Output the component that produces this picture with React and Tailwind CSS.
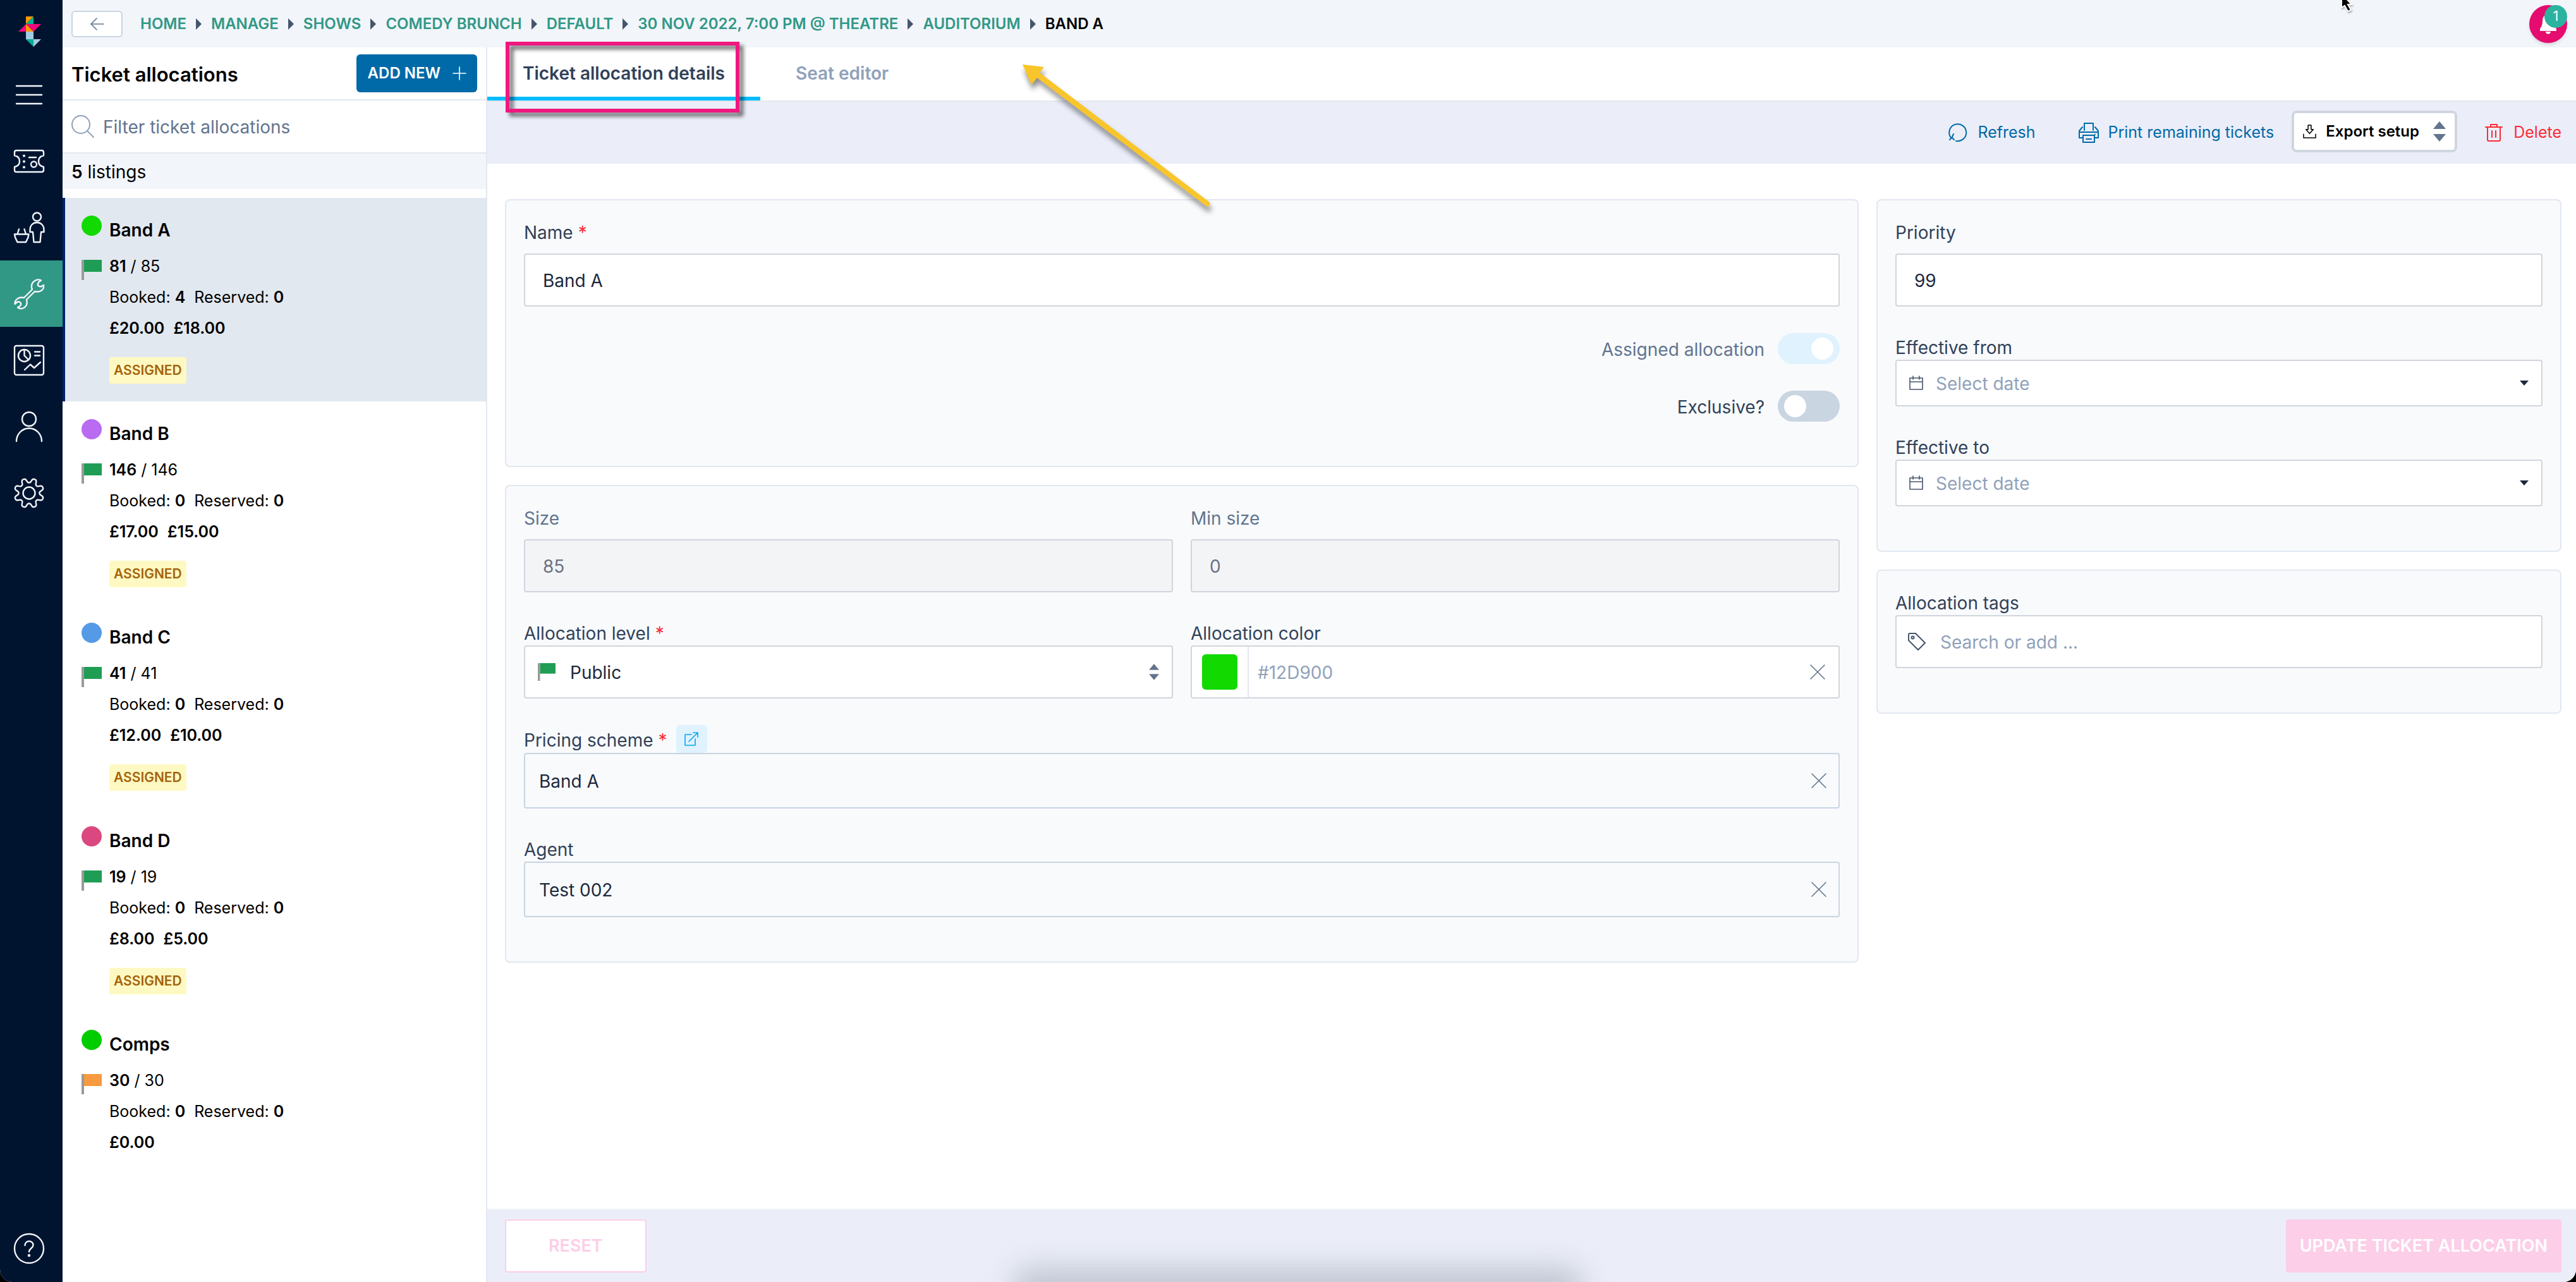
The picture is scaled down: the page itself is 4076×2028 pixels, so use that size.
import React, { useState } from 'react';
import clsx from 'clsx';

const allocations = [
    { name: 'Band A', color: '#12d900', level: '#1f9d55', free: 81, size: 85, booked: 4, reserved: 0, prices: ['£20.00', '£18.00'], assigned: true },
    { name: 'Band B', color: '#b96bf2', level: '#1f9d55', free: 146, size: 146, booked: 0, reserved: 0, prices: ['£17.00', '£15.00'], assigned: true },
    { name: 'Band C', color: '#559ae6', level: '#1f9d55', free: 41, size: 41, booked: 0, reserved: 0, prices: ['£12.00', '£10.00'], assigned: true },
    { name: 'Band D', color: '#da487f', level: '#1f9d55', free: 19, size: 19, booked: 0, reserved: 0, prices: ['£8.00', '£5.00'], assigned: true },
    { name: 'Comps', color: '#00cd00', level: '#f79a40', free: 30, size: 30, booked: 0, reserved: 0, prices: ['£0.00'], assigned: false },
];

const crumbs = [
    'Home', 'Manage', 'Shows', 'Comedy Brunch', 'Default',
    '30 Nov 2022, 7:00 PM @ Theatre', 'Auditorium',
];

// Eight rounded teeth, sampled around the circle
const gearPath = Array.from({ length: 144 }, (_, i) => {
    const a = (i / 144) * Math.PI * 2;
    const r = 20 + 3.8 * Math.tanh(1.6 * Math.cos(8 * (a - Math.PI / 8)));
    return `${i ? 'L' : 'M'}${(24 + r * Math.cos(a)).toFixed(2)} ${(24 + r * Math.sin(a)).toFixed(2)}`;
}).join('') + 'z';

const Line = ({ box = 48, width = 2, className, children }) => (
    <svg
        viewBox={`0 0 ${box} ${box}`}
        className={clsx('shrink-0 overflow-visible', className)}
        fill="none"
        stroke="currentColor"
        strokeWidth={width}
        strokeLinecap="round"
        strokeLinejoin="round"
        aria-hidden="true"
    >
        {children}
    </svg>
);

const navItems = [
    { label: 'Menu', icon: <path d="M4 10h40M4 24h40M4 38h40" /> },
    {
        label: 'Tickets',
        icon: (
            <>
                <path d="M4 7h40q3 0 3 3v5c-5 1-8 4.500-8 9s3 8 8 9v5q0 3-3 3H4q-3 0-3-3v-5c5-1 8-4.500 8-9s-3-8-8-9v-5q0-3 3-3z" />
                <path d="M24 18h11" />
                <circle cx="31.500" cy="29" r="4.500" />
                <path d="M16 15.500v.1M16 24.500v.1M16 33.500v.1" strokeWidth="4" />
            </>
        ),
    },
    {
        label: 'Box office',
        icon: (
            <>
                <circle cx="36.500" cy="7" r="6.500" />
                <path d="M25.500 31v-3c0-8 5-12 11-12s11 4 11 12v3H43l-1.500 16h-10L30 31z" />
                <path d="M1 34.500h22.500l-1 5-3.500 7.500H5.500L2 39.500zM8 26.500l-2.500 8M16.500 26.500l2.500 8" />
            </>
        ),
    },
    {
        label: 'Manage',
        active: true,
        icon: <path d="M43 2.500C36-1 27 5 28 14l1 3-13 13C8 28 1 33 1.500 40L5 37c3-2 7 1 6 4-.5 2.500-3 3-5 4.500 6 4 16 0 14.500-10.500l-.5-2 13-13c8 2 15-2 14-10l-3.500 2c-3 1-6.500-1-5.500-4 .5-3 3-4 5-5.500z" />,
    },
    {
        label: 'Reports',
        icon: (
            <>
                <rect x="1" y="1" width="46" height="46" rx="3" />
                <circle cx="16.500" cy="16.500" r="9.500" />
                <path d="M16.500 7v9.500l6.500 6.500M33 10.500h8M33 16.500h8M17 39l9-8.500 6 5.500 10-9" />
            </>
        ),
    },
    {
        label: 'Customers',
        icon: (
            <>
                <circle cx="24" cy="12" r="11" />
                <path d="M4 47a20 20.500 0 0 1 40 0" />
            </>
        ),
    },
    {
        label: 'Settings',
        icon: (
            <>
                <path d={gearPath} />
                <circle cx="24" cy="24" r="9.500" />
            </>
        ),
    },
];

const Flag = ({ color, className }) => (
    <svg viewBox="0 0 32 32" className={clsx('shrink-0', className)} aria-hidden="true">
        <path d="M0 0h4v32H0z" fill="#9a9a9a" />
        <path d="M4 0h28v19H4z" fill={color} />
    </svg>
);

const Sorter = ({ className }) => (
    <svg viewBox="0 0 20 32" className={clsx('pointer-events-none absolute text-slate-500', className)} fill="currentColor" aria-hidden="true">
        <path d="M10 0l10 12H0zM10 32l10-12H0z" />
    </svg>
);

const Cross = ({ label }) => (
    <button type="button" aria-label={label} className="absolute right-[22px] text-slate-500">
        <Line box={22} width={1.6} className="h-[22px] w-[22px]">
            <path d="M0 0l22 22M22 0L0 22" />
        </Line>
    </button>
);

const Card = ({ children }) => (
    <section className="rounded-lg border-2 border-slate-200 bg-slate-50 p-7 pb-[70px]">{children}</section>
);

const Label = ({ htmlFor, required, muted, children }) => (
    <label htmlFor={htmlFor} className={clsx('block pt-1 text-[28px] leading-[38px]', muted ? 'text-slate-500' : 'text-slate-700')}>
        {children}
        {required && <span className="ml-2 text-red-500">*</span>}
    </label>
);

const inputBase = 'block w-full rounded border-2 pt-[2px] text-[28px] outline-none placeholder:text-slate-400';
const inputPlain = 'border-gray-300 bg-white text-slate-800';
const inputMuted = 'border-gray-300 bg-gray-100 text-gray-500';
const inputTinted = 'border-slate-300 bg-slate-50 text-slate-800';

const Toggle = ({ id, label, checked, onChange, disabled }) => (
    <div className="flex items-center justify-end gap-[21px]">
        <label htmlFor={id} className={clsx('pt-[3px] text-[28px] leading-[46px]', disabled ? 'text-slate-500' : 'text-slate-700')}>{label}</label>
        <input
            id={id}
            type="checkbox"
            checked={checked}
            disabled={disabled}
            onChange={(e) => onChange(e.target.checked)}
            className="flex h-[49px] w-[98px] appearance-none items-center rounded-full bg-slate-300 px-[10px] before:h-[35px] before:w-[35px] before:rounded-full before:bg-white checked:justify-end checked:bg-sky-100"
        />
    </div>
);

const DateField = ({ id, label }) => (
    <div className="mt-[42px]">
        <Label htmlFor={id}>{label}</Label>
        <div className="relative flex items-center">
            <Line box={22} width={1.6} className="absolute left-[22px] h-[22px] w-[22px] text-slate-600">
                <path d="M1 3h20v18H1zM1 9h20M6 0v5M16 0v5" />
            </Line>
            <input id={id} placeholder="Select date" className={clsx(inputBase, inputPlain, 'h-[74px] pl-[62px]')} />
            <svg viewBox="0 0 14 8" className="absolute right-[22px] h-2 w-[14px] text-slate-800" fill="currentColor" aria-hidden="true">
                <path d="M0 0h14L7 8z" />
            </svg>
        </div>
    </div>
);

const Sidebar = () => (
    <nav className="flex w-[99px] shrink-0 flex-col bg-[#001430] text-slate-100">
        <a href="#home" aria-label="Home" className="flex h-[97px] pl-[22px] pt-[18px]">
            <svg viewBox="0 0 48 60" className="h-[60px] w-12" aria-hidden="true">
                <path d="M19 8h12L19 20z" fill="#ff9a00" />
                <path d="M31 8v12H19z" fill="#00b091" />
                <path d="M19 20L7 32h12zM19 20h24L31 32z" fill="#f0077a" />
                <path d="M19 20l12 12H19z" fill="#ff9a00" />
                <path d="M19 32h12v12H19zM31 44h12L31 56z" fill="#a3cbe4" />
                <path d="M19 44h12v12z" fill="#00b091" />
            </svg>
        </a>
        {navItems.map((item) => (
            <a
                key={item.label}
                href={`#${item.label}`}
                aria-label={item.label}
                className={clsx('flex h-[105px] items-center pl-[22px]', item.active && 'bg-[#319886]')}
            >
                <Line width={2.4} className="h-12 w-12">{item.icon}</Line>
            </a>
        ))}
        <a href="#help" aria-label="Help" className="mt-auto flex h-[106px] items-center pl-[22px]">
            <Line width={2.4} className="h-12 w-12">
                <circle cx="24" cy="24" r="23" />
                <path d="M17.500 19c0-4 3-6.500 6.500-6.500s6.500 2.500 6.500 6c0 5-6.500 5.500-6.500 10.500" />
                <circle cx="24" cy="35" r="1" fill="currentColor" />
            </Line>
        </a>
    </nav>
);

const Header = () => (
    <header className="flex h-[75px] shrink-0 items-center bg-[#f2f5fa] px-[14px]">
        <button type="button" aria-label="Back" className="flex h-[42px] w-[81px] items-center justify-center rounded-md border-2 border-slate-300 bg-white text-slate-500">
            <Line box={22} width={1.6} className="h-[22px] w-[22px]">
                <path d="M1 11h20M10 2L1 11l9 9" />
            </Line>
        </button>
        <nav className="ml-7 flex items-center text-[24px] font-semibold uppercase leading-[42px]">
            {crumbs.map((crumb) => (
                <React.Fragment key={crumb}>
                    <a href="#crumb" className="text-[#319886]">{crumb}</a>
                    <svg viewBox="0 0 9 18" className="mx-[15px] h-[18px] w-[9px] text-slate-600" fill="currentColor" aria-hidden="true">
                        <path d="M0 0v18l9-9z" />
                    </svg>
                </React.Fragment>
            ))}
            <span className="text-black">Band A</span>
        </nav>
        <button type="button" aria-label="Notifications" className="relative ml-auto flex h-[60px] w-[60px] items-center justify-center rounded-full bg-[#e50b6f] text-white shadow-md">
            <svg viewBox="0 0 28 32" className="h-8 w-7" fill="currentColor" aria-hidden="true">
                <path d="M14 1c-6 0-9 4-9 10 0 7-2 9-4 13v3h26v-3c-2-4-4-6-4-13 0-6-3-10-9-10zM10 28h8c0 5-8 5-8 0z" />
            </svg>
            <span className="absolute right-0 top-0 flex h-9 w-9 items-center justify-center rounded-full bg-[#2bb3a0] text-[21px]">1</span>
        </button>
    </header>
);

const AllocationItem = ({ item, selected, onSelect }) => (
    <li>
        <button
            type="button"
            onClick={onSelect}
            className={clsx(
                'flex h-[322px] w-full items-start gap-3 border-l-4 pl-[26px] pt-7 text-left text-[25px] text-black',
                selected ? 'border-[#002370] bg-slate-200' : 'border-transparent'
            )}
        >
            <span className="flex flex-col gap-[38px]">
                <span className="h-8 w-8 rounded-full" style={{ backgroundColor: item.color }} />
                <Flag color={item.level} className="h-8 w-8" />
            </span>
            <span className="flex flex-col items-start leading-[49px]">
                <span className="mb-[10px] text-[28px] font-semibold leading-[46px]">{item.name}</span>
                <span><b className="font-semibold">{item.free}</b> / {item.size}</span>
                <span className="flex gap-[14px]">
                    <span>Booked: <b className="font-semibold">{item.booked}</b></span>
                    <span>Reserved: <b className="font-semibold">{item.reserved}</b></span>
                </span>
                <span className="flex gap-[14px] font-semibold">
                    {item.prices.map((price) => <span key={price}>{price}</span>)}
                </span>
                {item.assigned && (
                    <span className="mt-[21px] rounded bg-yellow-100 px-[7px] text-[21px] font-semibold leading-[42px] text-[#a5630b]">ASSIGNED</span>
                )}
            </span>
        </button>
    </li>
);

const AllocationList = ({ selected, onSelect }) => (
    <aside className="flex w-[672px] shrink-0 flex-col border-r-2 border-slate-200 bg-white">
        <div className="flex h-[84px] items-center justify-between border-b-2 border-slate-200 px-[14px]">
            <h1 className="pt-1 text-[31px] font-semibold text-black">Ticket allocations</h1>
            <button type="button" className="flex h-[60px] items-center gap-5 rounded-md bg-sky-700 px-[18px] text-[24px] font-semibold text-white">
                ADD NEW
                <Line box={20} width={1.6} className="h-5 w-5">
                    <path d="M10 0v20M0 10h20" />
                </Line>
            </button>
        </div>
        <label className="flex h-[84px] items-center gap-[14px] border-b-2 border-slate-200 pl-[14px] text-slate-400">
            <Line box={36} width={2} className="h-9 w-9">
                <circle cx="15" cy="15" r="14" />
                <path d="M25 25l10 10" />
            </Line>
            <input aria-label="Filter ticket allocations" placeholder="Filter ticket allocations" className="w-full pt-[2px] text-[28px] text-slate-800 outline-none placeholder:text-slate-500" />
        </label>
        <p className="bg-[#f2f5fa] pl-[14px] pt-[3px] text-[28px] leading-[53px] text-black"><b className="font-semibold">5</b> listings</p>
        <ul className="mt-[14px]">
            {allocations.map((item) => (
                <AllocationItem key={item.name} item={item} selected={item.name === selected} onSelect={() => onSelect(item.name)} />
            ))}
        </ul>
    </aside>
);

const Toolbar = () => (
    <div className="flex h-[98px] shrink-0 items-center justify-end bg-[#ebeef8] pb-1 pr-[23px] text-[25px] text-sky-700">
        <button type="button" className="flex items-center gap-[15px] pt-1">
            <Line box={30} width={2} className="h-[30px] w-[30px]">
                <path d="M3 23a13.500 13.500 0 1 1 8 5M1 26l3.500-3.500L8 26M4.500 22.500L7 17" />
            </Line>
            Refresh
        </button>
        <button type="button" className="ml-[68px] flex items-center gap-[15px] pt-1">
            <Line box={32} width={2} className="h-8 w-8">
                <path d="M9 12V1h14v11M6 7l-5 6v11h5M26 7l5 6v11h-5M1 15h30M7 20h18v11H7zM12 26h8M26 18.500v.1" />
            </Line>
            Print remaining tickets
        </button>
        <div className="relative ml-7 flex items-center">
            <Line box={22} width={1.6} className="pointer-events-none absolute left-[18px] h-[21px] w-[21px] text-black">
                <path d="M1 15v6h20v-6M8.500 0h5v7H17l-6 7-6-7h3.500z" />
            </Line>
            <select aria-label="Export setup" className="h-[66px] appearance-none rounded-lg border-4 border-[#cfd6e0] bg-white pl-[50px] pr-[56px] text-[24px] font-semibold text-black">
                <option>Export setup</option>
            </select>
            <Sorter className="right-[18px] h-8 w-5" />
        </div>
        <button type="button" className="ml-11 flex items-center gap-[17px] pt-1 text-red-500">
            <Line box={28} width={2} className="h-7 w-7">
                <path d="M1 5h26M9 5V1h10v4M4 5v20q0 2 2 2h16q2 0 2-2V5M11 11v10M17 11v10" />
            </Line>
            Delete
        </button>
    </div>
);

const DetailsForm = () => {
    const [exclusive, setExclusive] = useState(false);

    return (
        <form className="grid flex-1 grid-cols-[2142fr_1084fr] content-start gap-7 pl-7 pr-[23px] pt-14">
            <div className="flex flex-col gap-7">
                <Card>
                    <Label htmlFor="name" required>Name</Label>
                    <input id="name" defaultValue="Band A" className={clsx(inputBase, inputPlain, 'mt-[14px] h-[84px] px-7')} />
                    <div className="mt-[42px] flex flex-col gap-[42px]">
                        <Toggle id="assigned" label="Assigned allocation" checked disabled />
                        <Toggle id="exclusive" label="Exclusive?" checked={exclusive} onChange={setExclusive} />
                    </div>
                </Card>
                <Card>
                    <div className="grid grid-cols-2 gap-x-7 gap-y-[42px]">
                        <div>
                            <Label htmlFor="size" muted>Size</Label>
                            <input id="size" disabled defaultValue="85" className={clsx(inputBase, inputMuted, 'mt-[14px] h-[84px] px-7')} />
                        </div>
                        <div>
                            <Label htmlFor="min-size" muted>Min size</Label>
                            <input id="min-size" disabled defaultValue="0" className={clsx(inputBase, inputMuted, 'mt-[14px] h-[84px] px-7')} />
                        </div>
                        <div>
                            <Label htmlFor="level" required>Allocation level</Label>
                            <div className="relative flex items-center">
                                <Flag color="#1f9d55" className="absolute left-[22px] h-7 w-7" />
                                <select id="level" className={clsx(inputBase, inputPlain, 'h-[84px] appearance-none pl-[71px]')}>
                                    <option>Public</option>
                                </select>
                                <Sorter className="right-[22px] h-[26px] w-4" />
                            </div>
                        </div>
                        <div>
                            <Label htmlFor="color">Allocation color</Label>
                            <div className="relative flex h-[84px] items-center rounded border-2 border-gray-300 bg-white">
                                <span className="flex h-full items-center border-r-2 border-slate-200 px-4">
                                    <span className="h-14 w-14 rounded-md bg-[#12d900]" />
                                </span>
                                <input id="color" placeholder="#12D900" className="w-full pl-[14px] pt-[2px] text-[28px] outline-none placeholder:text-slate-400" />
                                <Cross label="Clear color" />
                            </div>
                        </div>
                    </div>
                    <div className="mt-[42px] flex h-11 items-center gap-[14px]">
                        <Label htmlFor="pricing" required>Pricing scheme</Label>
                        <a href="#pricing" aria-label="Open pricing scheme" className="flex h-11 w-[49px] items-center justify-center rounded-md bg-sky-100 text-sky-500">
                            <Line box={22} width={1.6} className="h-[22px] w-[22px]">
                                <path d="M11 4H1v17h16V11M7 15L21 1M14 1h7v7" />
                            </Line>
                        </a>
                    </div>
                    <div className="relative flex items-center">
                        <input id="pricing" defaultValue="Band A" className={clsx(inputBase, inputTinted, 'h-[88px] pl-[22px]')} />
                        <Cross label="Clear pricing scheme" />
                    </div>
                    <div className="mt-[42px]">
                        <Label htmlFor="agent">Agent</Label>
                        <div className="relative flex items-center">
                            <input id="agent" defaultValue="Test 002" className={clsx(inputBase, inputTinted, 'h-[88px] pl-[22px]')} />
                            <Cross label="Clear agent" />
                        </div>
                    </div>
                </Card>
            </div>
            <div className="flex flex-col gap-7">
                <Card>
                    <Label htmlFor="priority">Priority</Label>
                    <input id="priority" defaultValue="99" className={clsx(inputBase, inputPlain, 'mt-[14px] h-[84px] px-7')} />
                    <DateField id="from" label="Effective from" />
                    <DateField id="to" label="Effective to" />
                </Card>
                <Card>
                    <Label htmlFor="tags">Allocation tags</Label>
                    <div className="relative flex items-center">
                        <Line box={28} width={2} className="absolute left-5 h-7 w-7 text-slate-600">
                            <path d="M1 3q0-2 2-2h9l15 15-11 11L1 12z" />
                            <circle cx="7.500" cy="7.500" r="2" />
                        </Line>
                        <input id="tags" placeholder="Search or add ..." className={clsx(inputBase, inputPlain, 'h-[84px] pl-[69px]')} />
                    </div>
                </Card>
            </div>
        </form>
    );
};

// Mark-up drawn on top of the page: boxed tab, arrow, pointer
const Annotations = () => (
    <>
        <div className="pointer-events-none absolute left-[800px] top-[66px] h-[112px] w-[370px] border-[6px] border-[#f0177f] drop-shadow-[6px_6px_3px_rgba(0,0,0,0.6)]" />
        <svg viewBox="0 0 320 250" className="pointer-events-none absolute left-[1610px] top-[94px] h-[250px] w-[320px] overflow-visible drop-shadow-[2px_8px_4px_rgba(0,0,0,0.45)]" aria-hidden="true">
            <path d="M8 8l34 4-7 9 269 205q2 6-4 7L31 29l-9 11z" fill="#f8c62a" />
        </svg>
        <svg viewBox="0 0 22 24" className="pointer-events-none absolute left-[3702px] top-0 h-6 w-[22px] overflow-visible drop-shadow-[1px_2px_1px_rgba(0,0,0,0.3)]" aria-hidden="true">
            <path d="M3-10v22l5-3 5 9 5-2-5-9h6z" fill="#000" stroke="#fff" strokeWidth="2" />
        </svg>
    </>
);

const App = () => {
    const [selected, setSelected] = useState('Band A');

    return (
        <div className="h-screen bg-black font-['Inter',sans-serif]">
            <div className="relative flex h-full overflow-hidden rounded-b-[20px] bg-white">
                <Sidebar />
                <div className="flex min-w-0 flex-1 flex-col">
                    <Header />
                    <div className="flex min-h-0 flex-1">
                        <AllocationList selected={selected} onSelect={setSelected} />
                        <main className="flex min-w-0 flex-1 flex-col">
                            <div className="flex h-[86px] shrink-0 border-b-2 border-slate-200 text-[28px] font-semibold">
                                <button type="button" className="border-b-[6px] border-sky-400 px-14 pt-1 text-slate-700">Ticket allocation details</button>
                                <button type="button" className="border-b-[6px] border-transparent px-14 pt-1 text-slate-400">Seat editor</button>
                            </div>
                            <Toolbar />
                            <DetailsForm />
                            <footer className="relative flex h-[116px] shrink-0 items-center justify-between overflow-hidden border-t-2 border-slate-100 bg-[#ebeef8] pl-7 pr-[23px] text-[27px] font-semibold">
                                <button type="button" disabled className="h-[84px] rounded border-2 border-pink-200 bg-white px-[67px] text-pink-200">RESET</button>
                                <button type="button" disabled className="h-[84px] rounded bg-pink-200 px-[22px] text-white">UPDATE TICKET ALLOCATION</button>
                                <div className="pointer-events-none absolute -bottom-10 left-[830px] right-[1570px] h-16 rounded-full bg-gray-400/50 blur-[22px]" />
                            </footer>
                        </main>
                    </div>
                </div>
                <Annotations />
            </div>
        </div>
    );
};

export default App;
